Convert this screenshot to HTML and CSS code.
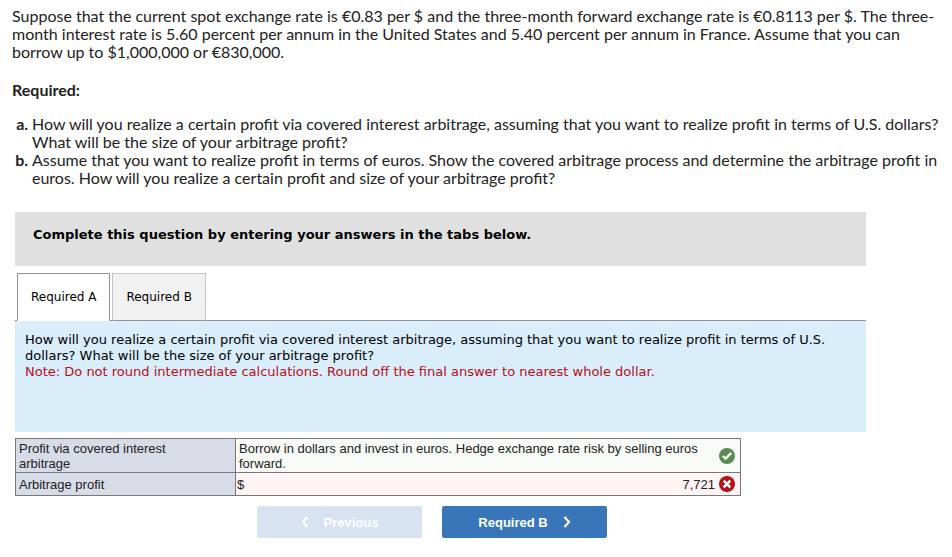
FILE: index.html
```html
<!DOCTYPE html>
<html lang="en">
<head>
    <meta charset="UTF-8">
    <meta name="viewport" content="width=device-width, initial-scale=1.0">
    <title>Covered Interest Arbitrage</title>
    <link rel="stylesheet" href="styles.css">
</head>
<body>
    <div class="question">
        <p>Suppose that the current spot exchange rate is €0.83 per $ and the three-month forward exchange rate is €0.8113 per $. The three-month interest rate is 5.60 percent per annum in the United States and 5.40 percent per annum in France. Assume that you can borrow up to $1,000,000 or €830,000.</p>
        <h2>Required:</h2>
        <ol class="parts">
            <li>How will you realize a certain profit via covered interest arbitrage, assuming that you want to realize profit in terms of U.S. dollars? What will be the size of your arbitrage profit?</li>
            <li>Assume that you want to realize profit in terms of euros. Show the covered arbitrage process and determine the arbitrage profit in euros. How will you realize a certain profit and size of your arbitrage profit?</li>
        </ol>
    </div>

    <div class="worksheet">
        <div class="banner">Complete this question by entering your answers in the tabs below.</div>

        <div class="tabs" role="tablist">
            <button type="button" class="tab active" role="tab" aria-selected="true">Required A</button>
            <button type="button" class="tab" role="tab" aria-selected="false">Required B</button>
        </div>

        <div class="prompt">
            <p>How will you realize a certain profit via covered interest arbitrage, assuming that you want to realize profit in terms of U.S. dollars? What will be the size of your arbitrage profit?</p>
            <p class="note">Note: Do not round intermediate calculations. Round off the final answer to nearest whole dollar.</p>
        </div>

        <table class="answers">
            <tbody>
                <tr>
                    <th scope="row">Profit via covered interest arbitrage</th>
                    <td class="correct">
                        <div class="cell">
                            <span class="choice">Borrow in dollars and invest in euros. Hedge exchange rate risk by selling euros forward.</span>
                            <svg class="mark" viewBox="0 0 16 16" aria-hidden="true">
                                <circle cx="8" cy="8" r="8" fill="#5b8c51"/>
                                <path d="M3.800 8l2.700 2.600L12.200 5" fill="none" stroke="#fff" stroke-width="2.4"/>
                            </svg>
                        </div>
                    </td>
                </tr>
                <tr>
                    <th scope="row"><label for="profit">Arbitrage profit</label></th>
                    <td class="incorrect">
                        <div class="cell amount">
                            <span>$</span>
                            <input type="text" id="profit" value="7,721">
                            <svg class="mark" viewBox="0 0 16 16" aria-hidden="true">
                                <circle cx="8" cy="8" r="8" fill="#b31217"/>
                                <path d="M4.700 4.700l6.600 6.600M11.300 4.700l-6.600 6.600" fill="none" stroke="#fff" stroke-width="2.6"/>
                            </svg>
                        </div>
                    </td>
                </tr>
            </tbody>
        </table>

        <div class="nav">
            <button type="button" class="nav-btn" disabled>
                <svg class="chevron" viewBox="0 0 8 12" aria-hidden="true"><path d="M6.500 1L2 6l4.500 5"/></svg>
                Previous
            </button>
            <button type="button" class="nav-btn">
                Required B
                <svg class="chevron" viewBox="0 0 8 12" aria-hidden="true"><path d="M1.500 1L6 6l-4.500 5"/></svg>
            </button>
        </div>
    </div>
</body>
</html>
```

FILE: styles.css
```css
* {
    margin: 0;
    padding: 0;
    box-sizing: border-box;
}
body {
    background-color: #fff;
    color: #222;
    font-family: "Proxima Nova", Lato, sans-serif;
    font-size: 16px;
    line-height: 18px;
    padding: 7px 12px;
}
h2 {
    font-size: 16px;
    line-height: 18px;
    margin: 20px 0 16px;
}
.parts {
    padding-left: 20px;
    list-style: lower-alpha;
}
.parts li::marker {
    font-weight: bold;
}
.worksheet {
    max-width: 854px;
    padding-left: 3px;
    margin-top: 25px;
    font-family: Verdana, "DejaVu Sans", sans-serif;
    font-size: 13px;
    line-height: 16px;
    color: #000;
}
.banner {
    background-color: #e0e0e0;
    font-weight: bold;
    padding: 15px 18px 23px;
}
.tabs {
    display: flex;
    gap: 2px;
    padding: 0 2px;
    margin-top: 7px;
    border-bottom: 1px solid #949494;
}
.tab {
    height: 48px;
    margin-bottom: -1px;
    padding: 0 13px;
    border: 1px solid #c4c4c4;
    border-bottom-color: #949494;
    background-color: #f2f2f2;
    font-family: inherit;
    font-size: 12px;
    color: #000;
    cursor: pointer;
}
.tab.active {
    border-color: #949494;
    border-bottom-color: #fff;
    background-color: #fff;
}
.prompt {
    background-color: #d9edfb;
    padding: 11px 10px 52px;
}
.note {
    color: #b31020;
}
.answers {
    width: 726px;
    max-width: 100%;
    margin-top: 6px;
    border-collapse: collapse;
    table-layout: fixed;
    font-family: Arial, "Liberation Sans", sans-serif;
    font-size: 13px;
    line-height: 15px;
    color: #222;
}
.answers th,
.answers td {
    border: 1px solid #777;
}
.answers th {
    width: 220px;
    padding: 2px 20px 1px 3px;
    background-color: #d8dce7;
    font-weight: normal;
    text-align: left;
}
.correct {
    background-color: #f8faf7;
}
.incorrect {
    background-color: #fff4f4;
}
.cell {
    display: flex;
    align-items: center;
    gap: 4px;
    padding: 2px 5px 1px 3px;
}
.choice {
    flex: 1;
    padding-right: 12px;
}
.amount {
    padding: 3px 5px 3px 1px;
}
.amount input {
    flex: 1;
    min-width: 0;
    height: 16px;
    border: none;
    background: transparent;
    font: inherit;
    color: inherit;
    text-align: right;
}
.mark {
    flex: none;
    width: 16px;
    height: 16px;
}
.nav {
    display: flex;
    justify-content: center;
    gap: 20px;
    margin-top: 10px;
    padding-right: 17px;
}
.nav-btn {
    display: flex;
    align-items: center;
    justify-content: center;
    gap: 15px;
    width: 165px;
    height: 32px;
    border: none;
    border-radius: 2px;
    background-color: #3875b9;
    color: #fff;
    font-family: Arial, "Liberation Sans", sans-serif;
    font-size: 13px;
    font-weight: bold;
    cursor: pointer;
}
.nav-btn:disabled {
    background-color: #d7e3f1;
    cursor: default;
}
.chevron {
    width: 8px;
    height: 12px;
    fill: none;
    stroke: #fff;
    stroke-width: 2.2;
}
```
